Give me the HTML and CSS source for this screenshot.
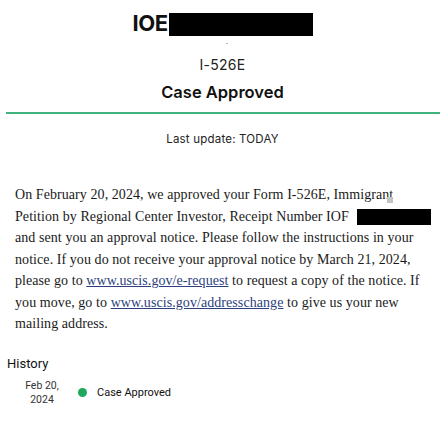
FILE: index.html
```html
<!DOCTYPE html>
<html lang="en">
<head>
<meta charset="utf-8">
<link rel="stylesheet" href="styles.css">
</head>
<body>
<header class="case-head">
  <div class="receipt">IOE<span class="redact-title"></span></div>
  <div class="speck"></div>
  <div class="form-type">I-526E</div>
  <div class="status">Case Approved</div>
</header>
<div class="divider"></div>
<div class="updated">Last update: TODAY</div>
<p class="notice">On February 20, 2024, we approved your Form I-526E, Immigrant<span class="grey-mark"></span><br>Petition by Regional Center Investor, Receipt Number IOF <span class="redact-inline"></span><br>and sent you an approval notice. Please follow the instructions in your<br>notice. If you do not receive your approval notice by March 21, 2024,<br>please go to <a class="link">www.uscis.gov/e-request</a> to request a copy of the notice. If<br>you move, go to <a class="link">www.uscis.gov/addresschange</a> to give us your new<br>mailing address.</p>
<section class="history">
  <h2 class="history-title">History</h2>
  <div class="history-row">
    <div class="history-date">Feb 20,<br>2024</div>
    <span class="history-dot"></span>
    <span class="history-label">Case Approved</span>
  </div>
</section>
</body>
</html>
```

FILE: styles.css
```css
* { box-sizing: border-box; }
html, body { margin: 0; padding: 0; background: #fff; }
body { width: 445px; height: 425px; overflow: hidden; color: #111; font-family: Inter, "Liberation Sans", sans-serif; }

.case-head { display: flex; flex-direction: column; align-items: center; padding-top: 9px; }
.receipt { font-size: 22px; font-weight: 700; line-height: 28px; display: flex; align-items: center; letter-spacing: -0.5px; }
.redact-title { display: inline-block; width: 144px; height: 23px; background: #000; margin-left: 1px; margin-top: 2px; }
.speck { width: 2px; height: 1px; background: #bbb; margin-top: 6px; margin-left: 8px; }
.form-type { font-size: 14px; line-height: 16px; margin-top: 13px; color: #222; letter-spacing: 0.3px; }
.status { font-size: 16.5px; font-weight: 600; line-height: 20px; margin-top: 9px; }

.divider { height: 2px; background: #3fb47f; margin: 10px 5px 0 6px; }
.updated { text-align: center; font-size: 11.5px; line-height: 14px; margin-top: 18px; color: #222; letter-spacing: 0.2px; }

.notice { margin: 38px 0 0 15px; font-family: "Liberation Serif", "Times New Roman", serif; font-size: 14px; letter-spacing: 0.07px; line-height: 21.5px; color: #1a1a1a; white-space: nowrap; }
.link { color: #2d3f7e; text-decoration: underline; }
.grey-mark { display: inline-block; width: 6px; height: 6px; background: #c4c4c4; margin-left: -6px; vertical-align: -4px; }
.redact-inline { display: inline-block; width: 74px; height: 16px; background: #000; vertical-align: -4px; margin-left: 5px; }

.history { margin-top: 20px; font-family: Roboto, "Noto Sans", sans-serif; }
.history-title { font-size: 13px; font-weight: 400; margin: 0 0 0 7px; line-height: 18px; color: #111; }
.history-row { display: flex; align-items: center; margin-top: 6px; }
.history-date { width: 40px; margin-left: 22px; text-align: center; font-size: 10.5px; line-height: 14px; color: #333; }
.history-dot { width: 9px; height: 9px; border-radius: 50%; background: #1fa85c; margin-left: 16px; }
.history-label { font-size: 11px; margin-left: 10px; color: #111; }
```
